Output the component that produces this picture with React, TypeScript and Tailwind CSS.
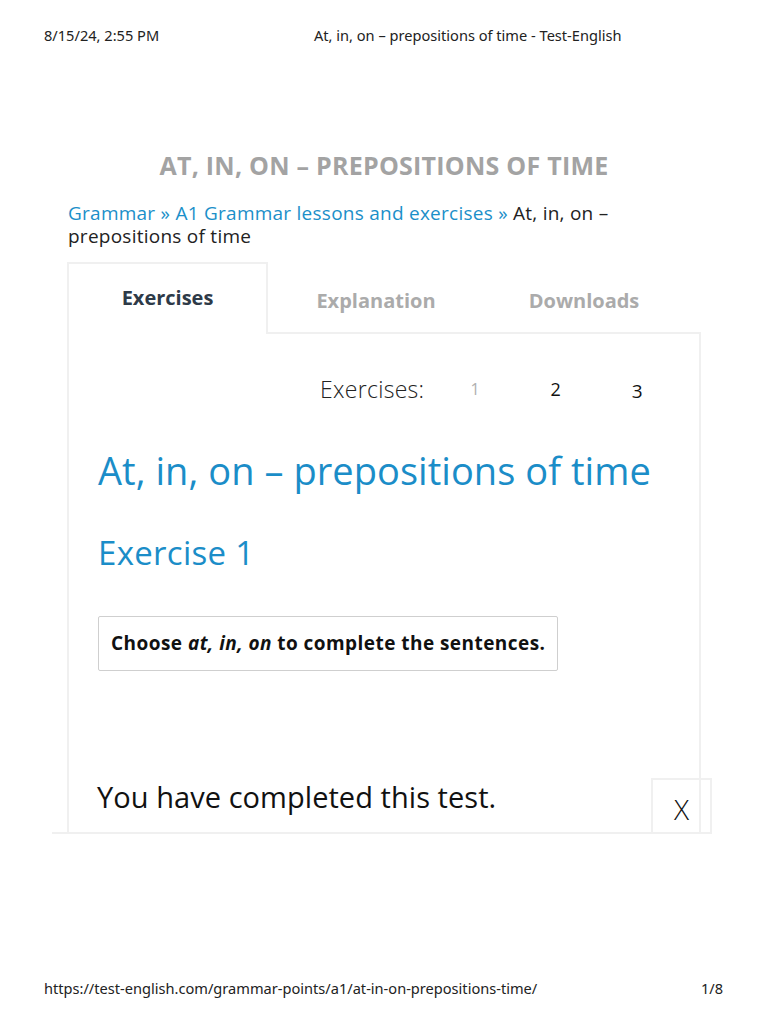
import React from "react";

export default function App() {
  const raleway = { fontFamily: "'Open Sans', Lato, sans-serif" };
  return (
    <div className="relative w-[768px] h-[1024px] bg-white overflow-hidden" style={raleway}>
      {/* print header */}
      <div className="flex h-[50px] items-start pt-[25px] px-[44px] text-[14.6px] text-[#222]" style={{ fontFamily: "'Noto Sans', sans-serif" }}>
        <span className="w-[270px]">8/15/24, 2:55 PM</span>
        <span>At, in, on – prepositions of time - Test-English</span>
      </div>

      <div className="pt-[98px] px-[68px]">
        <h1 className="text-center text-[25px] font-bold text-[#a3a3a3] tracking-[0.25px] leading-[34px] uppercase">
          AT, IN, ON – PREPOSITIONS OF TIME
        </h1>
        <p className="mt-[20px] text-[19px] tracking-[0.25px] leading-[23px] text-[#222]">
          <span className="text-[#1b8fc9]">Grammar » A1 Grammar lessons and exercises » </span>
          At, in, on –<br />prepositions of time
        </p>
      </div>

      <div className="ml-[67px] mt-[14px] w-[634px]">
        {/* tabs */}
        <div className="flex h-[72px]">
          <div className="w-[201px] border-t-2 border-l-2 border-r-2 border-[#f0f0f0] flex justify-center pt-[19px]">
            <span className="text-[20px] font-bold text-[#2e3a48]">Exercises</span>
          </div>
          <div className="flex-1 border-b-2 border-[#f0f0f0] flex">
            <div className="w-[216px] flex justify-center pt-[24px]">
              <span className="text-[20px] font-bold text-[#ababab]">Explanation</span>
            </div>
            <div className="w-[200px] flex justify-center pt-[24px]">
              <span className="text-[20px] font-bold text-[#ababab]">Downloads</span>
            </div>
          </div>
        </div>
        {/* content */}
        <div className="h-[498px] border-l-2 border-r-2 border-[#f0f0f0] pl-[29px]">
          <div className="flex items-center pt-[40px] h-[70px]">
            <span className="ml-[222px] text-[23px] tracking-[0.3px] font-light text-[#222]">Exercises:</span>
            <span className="ml-[46px] text-[16px] text-[#b0b0b0]">1</span>
            <span className="ml-[71px] text-[18px] text-[#111]">2</span>
            <span className="ml-[71px] text-[19px] text-[#111] mt-[4px]">3</span>
          </div>
          <h2 className="mt-[44px] text-[38px] tracking-[0.05px] leading-[44px] text-[#1b8dc8] font-normal">
            At, in, on – prepositions of time
          </h2>
          <h3 className="mt-[42px] text-[33px] tracking-[0.3px] leading-[38px] text-[#1b8dc8] font-normal">Exercise 1</h3>
          <div className="mt-[44px] w-[460px] h-[55px] border border-[#cfcfcf] rounded-[2px] flex items-center pl-[12px]">
            <span className="text-[19px] tracking-[0.45px] font-bold text-[#111]">
              Choose <i>at, in, on</i> to complete the sentences.
            </span>
          </div>
        </div>
      </div>

      {/* completion banner overlay */}
      <div className="absolute left-[52px] top-[778px] w-[660px] h-[56px] border-b-2 border-[#f0f0f0] flex">
        <div className="flex-1 pl-[45px]">
          <span className="relative -top-[3px] text-[29px] tracking-[0.05px] text-[#111] font-normal">You have completed this test.</span>
        </div>
        <div className="w-[61px] border-t-2 border-l-2 border-r-2 border-[#f0f0f0] flex items-center justify-center pt-[6px]">
          <span className="text-[28px] font-light text-[#111]">X</span>
        </div>
      </div>

      {/* print footer */}
      <div className="absolute left-0 right-0 top-[978px] flex justify-between px-[44px] text-[14.6px] text-[#222]" style={{ fontFamily: "'Noto Sans', sans-serif" }}>
        <span>https://test-english.com/grammar-points/a1/at-in-on-prepositions-time/</span>
        <span className="mr-[1px]">1/8</span>
      </div>
    </div>
  );
}
